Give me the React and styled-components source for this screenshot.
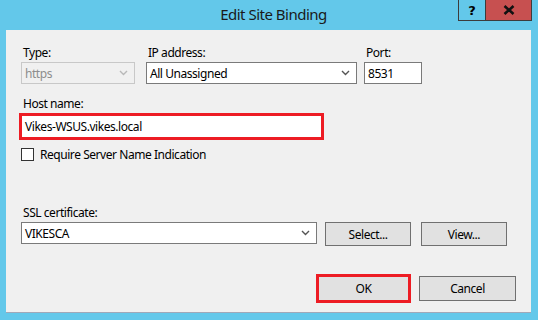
import React from 'react';
import styled, { createGlobalStyle } from 'styled-components';

const GlobalStyle = createGlobalStyle`
  html, body {
    margin: 0;
    padding: 0;
    background: #63c8ea;
  }
  body {
    font-family: "Noto Sans", "Open Sans", sans-serif;
    font-size: 12px;
    letter-spacing: -0.45px;
    color: #000;
  }
`;

const Window = styled.div`
  box-sizing: border-box;
  width: 538px;
  height: 320px;
  background: #63c8ea;
  display: flex;
  flex-direction: column;
  padding: 0 7px 7px 6px;
`;

const TitleBar = styled.div`
  position: relative;
  height: 30px;
  display: flex;
  justify-content: center;
  align-items: flex-start;
`;

const Title = styled.div`
  font-size: 15px;
  line-height: 18px;
  margin-top: 5px;
  margin-left: 10px;
  letter-spacing: -0.5px;
  color: #1a1a1a;
`;

const Caption = styled.div`
  position: absolute;
  top: 0;
  right: -7px;
  display: flex;
  margin-right: 6px;
`;

const CaptionButton = styled.div`
  box-sizing: border-box;
  width: ${(p) => p.$w}px;
  height: 21px;
  border: 1px solid #3c3c3c;
  border-top: none;
  border-left-width: ${(p) => (p.$first ? 1 : 0)}px;
  background: ${(p) => p.$bg};
  display: flex;
  align-items: center;
  justify-content: center;
  font-family: "DejaVu Sans", sans-serif;
  font-weight: bold;
  font-size: 13px;
  letter-spacing: 0;
`;

const Client = styled.div`
  flex: 1;
  background: #f0f0f0;
  border-bottom: 1px solid #a0a8b8;
  padding: 0 0 0 15px;
  position: relative;
`;

const TopRow = styled.div`
  display: flex;
  margin-top: 15px;
`;

const Field = styled.div`
  display: flex;
  flex-direction: column;
  margin-right: ${(p) => p.$gap || 0}px;
`;

const Label = styled.div`
  line-height: 16px;
  height: 17px;
  padding-left: 2px;
`;

const SelectBox = styled.div`
  box-sizing: border-box;
  width: ${(p) => p.$w}px;
  height: ${(p) => p.$h || 22}px;
  border: 1px solid ${(p) => (p.$disabled ? '#c8c8c8' : '#7a7a7a')};
  background: ${(p) => (p.$disabled ? '#f0f0f0' : '#fff')};
  color: ${(p) => (p.$disabled ? '#8d8d8d' : '#000')};
  display: flex;
  align-items: center;
  justify-content: space-between;
  padding: 0 6px 0 3px;
`;

const TextBox = styled.div`
  box-sizing: border-box;
  width: ${(p) => p.$w}px;
  height: 22px;
  border: 1px solid #7a7a7a;
  background: #fff;
  display: flex;
  align-items: center;
  padding: 0 3px;
`;

const HostBox = styled.div`
  box-sizing: border-box;
  width: 305px;
  height: 27px;
  margin-left: -2px;
  border: 3px solid #ed1c24;
  background: #fff;
  display: flex;
  align-items: center;
  padding: 0 3px;
`;

const Section = styled.div`
  margin-top: ${(p) => p.$mt}px;
`;

const CheckRow = styled.div`
  display: flex;
  align-items: center;
  margin-top: 6px;
`;

const CheckBox = styled.div`
  box-sizing: border-box;
  width: 13px;
  height: 13px;
  border: 1px solid #333;
  background: #fff;
  margin-right: 6px;
`;

const ControlRow = styled.div`
  display: flex;
  align-items: flex-start;
`;

const Button = styled.div`
  box-sizing: border-box;
  width: ${(p) => p.$w}px;
  height: ${(p) => p.$h}px;
  margin-left: ${(p) => p.$ml}px;
  border: 1px solid #707070;
  background: #e1e1e1;
  display: flex;
  align-items: center;
  justify-content: center;
`;

const FocusRing = styled.div`
  box-sizing: border-box;
  border: 3px solid #ed1c24;
  width: 95px;
  height: 29px;
  margin-left: ${(p) => p.$ml}px;
  display: flex;
  align-items: center;
  justify-content: center;
  background: #e1e1e1;
`;

const Footer = styled.div`
  display: flex;
  align-items: center;
  margin-top: 28px;
`;

const Chevron = ({ light }) => (
  <svg width="9" height="6" viewBox="0 0 9 6">
    <path d="M1 1 L4.5 4.5 L8 1" fill="none" stroke={light ? '#b8b8b8' : '#555'} strokeWidth="1.4" />
  </svg>
);

const CloseX = () => (
  <svg width="12" height="10" viewBox="0 0 12 10">
    <path d="M1.5 1 L10.5 9 M10.5 1 L1.5 9" stroke="#111" strokeWidth="2.6" />
  </svg>
);

export default function App() {
  return (
    <>
      <GlobalStyle />
      <Window>
        <TitleBar>
          <Title>Edit Site Binding</Title>
          <Caption>
            <CaptionButton $w={28} $bg="#63c8ea" $first>?</CaptionButton>
            <CaptionButton $w={46} $bg="#c75050"><CloseX /></CaptionButton>
          </Caption>
        </TitleBar>
        <Client>
          <TopRow>
            <Field $gap={11}>
              <Label>Type:</Label>
              <SelectBox $w={114} $disabled>
                https
                <Chevron light />
              </SelectBox>
            </Field>
            <Field $gap={7}>
              <Label>IP address:</Label>
              <SelectBox $w={211}>
                All Unassigned
                <Chevron />
              </SelectBox>
            </Field>
            <Field>
              <Label>Port:</Label>
              <TextBox $w={58}>8531</TextBox>
            </Field>
          </TopRow>
          <Section $mt={12}>
            <Label>Host name:</Label>
            <HostBox>Vikes-WSUS.vikes.local</HostBox>
          </Section>
          <CheckRow>
            <CheckBox />
            Require Server Name Indication
          </CheckRow>
          <Section $mt={42}>
            <Label>SSL certificate:</Label>
            <ControlRow>
              <SelectBox $w={296} $h={22}>
                VIKESCA
                <Chevron />
              </SelectBox>
              <Button $w={86} $h={24} $ml={8}>Select...</Button>
              <Button $w={86} $h={24} $ml={10}>View...</Button>
            </ControlRow>
          </Section>
          <Footer>
            <FocusRing $ml={295}>OK</FocusRing>
            <Button $w={97} $h={25} $ml={8}>Cancel</Button>
          </Footer>
        </Client>
      </Window>
    </>
  );
}
